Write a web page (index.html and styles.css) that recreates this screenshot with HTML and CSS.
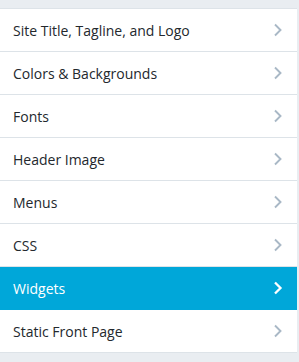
FILE: index.html
```html
<!DOCTYPE html>
<html lang="en">
<head>
    <meta charset="UTF-8">
    <meta name="viewport" content="width=device-width, initial-scale=1.0">
    <title>Customize</title>
    <link rel="stylesheet" href="styles.css">
</head>
<body>
    <ul class="section-list">
        <li class="section-item">
            <span>Site Title, Tagline, and Logo</span>
            <svg class="chevron" width="10" height="14" viewBox="0 0 10 14"><polyline points="2,1.5 7.5,7 2,12.5" /></svg>
        </li>
        <li class="section-item">
            <span>Colors &amp; Backgrounds</span>
            <svg class="chevron" width="10" height="14" viewBox="0 0 10 14"><polyline points="2,1.5 7.5,7 2,12.5" /></svg>
        </li>
        <li class="section-item">
            <span>Fonts</span>
            <svg class="chevron" width="10" height="14" viewBox="0 0 10 14"><polyline points="2,1.5 7.5,7 2,12.5" /></svg>
        </li>
        <li class="section-item">
            <span>Header Image</span>
            <svg class="chevron" width="10" height="14" viewBox="0 0 10 14"><polyline points="2,1.5 7.5,7 2,12.5" /></svg>
        </li>
        <li class="section-item">
            <span>Menus</span>
            <svg class="chevron" width="10" height="14" viewBox="0 0 10 14"><polyline points="2,1.5 7.5,7 2,12.5" /></svg>
        </li>
        <li class="section-item">
            <span>CSS</span>
            <svg class="chevron" width="10" height="14" viewBox="0 0 10 14"><polyline points="2,1.5 7.5,7 2,12.5" /></svg>
        </li>
        <li class="section-item active">
            <span>Widgets</span>
            <svg class="chevron" width="10" height="14" viewBox="0 0 10 14"><polyline points="2,1.5 7.5,7 2,12.5" /></svg>
        </li>
        <li class="section-item">
            <span>Static Front Page</span>
            <svg class="chevron" width="10" height="14" viewBox="0 0 10 14"><polyline points="2,1.5 7.5,7 2,12.5" /></svg>
        </li>
    </ul>
</body>
</html>
```

FILE: styles.css
```css
body {
    margin: 0;
    padding: 8px 0 0 0;
    background: #e9edf1;
    font-family: "Open Sans", "Noto Sans", sans-serif;
}

.section-list {
    list-style: none;
    margin: 0;
    padding: 0;
    width: 297px;
    border-top: 1px solid #dde3e8;
    background: #fff;
}

.section-item {
    display: flex;
    align-items: center;
    justify-content: space-between;
    height: 42px;
    padding: 0 14px 0 13px;
    border-bottom: 1px solid #dde3e8;
    color: #23282d;
    font-size: 14px;
    cursor: pointer;
}

.section-item.active {
    background: #00a7d9;
    border-bottom-color: #00a7d9;
    color: #fff;
}

.chevron {
    fill: none;
    stroke: #a9b8c6;
    stroke-width: 1.9;
}

.section-item.active .chevron {
    stroke: #fff;
    stroke-width: 2.3;
}
```
